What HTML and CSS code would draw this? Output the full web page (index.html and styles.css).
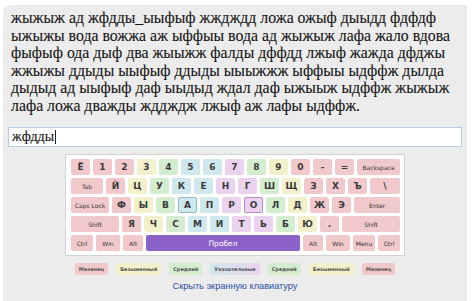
FILE: index.html
```html
<!DOCTYPE html>
<html lang="ru">
<head>
<meta charset="utf-8">
<link rel="stylesheet" href="styles.css">
</head>
<body>
<div class="panel">
  <p class="lesson">жыжыж ад жфдды_ыыфыф жждждд ложа ожыф дыыдд фдфдф<br>ыжыжы вода вожжа аж ыффыы вода ад жыжыж лафа жало вдова<br>фыфыф ода дыф два жыыжж фалды дффдд лжыф жажда дфджы<br>жжыжы ддыды ыыфыф ддыды ыыыжжж ыффыы ыдффж дылда<br>дыдыд ад ыыфыф даф ыыдыд ждал даф ыжыыж ыдффж жыжыж<br>лафа ложа дважды жддждж лжыф аж лафы ыдффж.</p>
  <div class="input"><span>жфдды</span><span class="caret"></span></div>
  <div class="keyboard">
    <div class="row">
      <div class="key p">Ё</div><div class="key p">1</div><div class="key p">2</div><div class="key y">3</div><div class="key g">4</div><div class="key b">5</div><div class="key b">6</div><div class="key l">7</div><div class="key g">8</div><div class="key y">9</div><div class="key p">0</div><div class="key p">-</div><div class="key p">=</div><div class="key p wide word">Backspace</div>
    </div>
    <div class="row">
      <div class="key p tab word">Tab</div><div class="key p">Й</div><div class="key y">Ц</div><div class="key g">У</div><div class="key b">К</div><div class="key b">Е</div><div class="key l">Н</div><div class="key l">Г</div><div class="key g">Ш</div><div class="key y">Щ</div><div class="key p">З</div><div class="key p">Х</div><div class="key p">Ъ</div><div class="key p wide">\</div>
    </div>
    <div class="row">
      <div class="key p caps word">Caps Lock</div><div class="key p">Ф</div><div class="key y">Ы</div><div class="key g">В</div><div class="key b home">А</div><div class="key b">П</div><div class="key l">Р</div><div class="key l home">О</div><div class="key g">Л</div><div class="key y">Д</div><div class="key p">Ж</div><div class="key p">Э</div><div class="key p wide word">Enter</div>
    </div>
    <div class="row">
      <div class="key p shift word">Shift</div><div class="key p">Я</div><div class="key y">Ч</div><div class="key g">С</div><div class="key b">М</div><div class="key b">И</div><div class="key l">Т</div><div class="key l">Ь</div><div class="key g">Б</div><div class="key y">Ю</div><div class="key p">.</div><div class="key p wide word">Shift</div>
    </div>
    <div class="row">
      <div class="key p ctrl word">Ctrl</div><div class="key p win word">Win</div><div class="key p alt word">Alt</div><div class="key space wide">Пробел</div><div class="key p alt word">Alt</div><div class="key p win word">Win</div><div class="key p menu word">Menu</div><div class="key p ctrl word">Ctrl</div>
    </div>
  </div>
  <div class="legend">
    <span class="tag p">Мизинец</span>
    <span class="tag y">Безымянный</span>
    <span class="tag g">Средний</span>
    <span class="tag idx">Указательные</span>
    <span class="tag g">Средний</span>
    <span class="tag y">Безымянный</span>
    <span class="tag p">Мизинец</span>
  </div>
  <a class="hide" href="#">Скрыть экранную клавиатуру</a>
</div>
</body>
</html>
```
FILE: styles.css
```css
html, body {
  margin: 0;
  padding: 0;
  background: #ffffff;
}
body {
  width: 474px;
  height: 301px;
  overflow: hidden;
}
.panel {
  margin: 5px 0 0 3px;
  width: 464px;
  height: 300px;
  background: #ececec;
  border-radius: 7px 0 0 0;
  padding: 4px 0 0 0;
  box-sizing: border-box;
  display: flex;
  flex-direction: column;
  align-items: center;
}
.lesson {
  align-self: stretch;
  margin: 0;
  padding: 0 0 0 8px;
  font-family: "Liberation Serif", "Times New Roman", serif;
  font-size: 15.8px;
  line-height: 17.5px;
  color: #161616;
  -webkit-text-stroke: 0.12px #161616;
  white-space: nowrap;
}
.input {
  align-self: stretch;
  margin: 13px 5px 0 5px;
  height: 20px;
  box-sizing: border-box;
  background: #ffffff;
  border: 1px solid #b7cbe6;
  display: flex;
  align-items: center;
  padding-left: 3px;
  font-family: "Liberation Serif", "Times New Roman", serif;
  font-size: 14px;
  color: #111;
  -webkit-text-stroke: 0.12px #111111;
}
.caret {
  width: 1px;
  height: 14px;
  background: #222;
  margin-left: 1px;
}
.keyboard {
  margin-top: 7px;
  width: 340px;
  box-sizing: border-box;
  background: #ffffff;
  border: 1px solid #d2d2d2;
  padding: 4px 4px 4px 5px;
  display: flex;
  flex-direction: column;
  gap: 3px;
}
.row {
  display: flex;
  gap: 3px;
  height: 16px;
}
.key {
  width: 19px;
  flex: none;
  border-radius: 2px;
  display: flex;
  align-items: center;
  justify-content: center;
  font-family: "DejaVu Sans", sans-serif;
  font-weight: bold;
  font-size: 9px;
  color: #3a3a3a;
  box-sizing: border-box;
}
.key.word {
  font-size: 6px;
  font-weight: normal;
  color: #333;
}
.key.wide { flex: 1 1 auto; width: auto; }
.key.tab { width: 32px; }
.key.caps { width: 38px; }
.key.shift { width: 48px; }
.key.ctrl { width: 22px; }
.key.win { width: 24px; }
.key.alt { width: 20px; }
.key.menu { width: 22px; }
.p { background: #f1c9cb; }
.y { background: #f3f1cb; }
.g { background: #d4edcf; }
.b { background: #cfe8ee; }
.l { background: #ebd3ef; }
.key.home.b { border: 1px solid #8fb9c4; }
.key.home.l { border: 1px solid #b48cc4; }
.key.space {
  background: #8b63c8;
  color: #ffffff;
  font-weight: normal;
  font-size: 7.5px;
}
.legend {
  margin-top: 7px;
  display: flex;
  gap: 8px;
}
.tag {
  font-family: "DejaVu Sans", sans-serif;
  font-size: 5px;
  font-weight: bold;
  color: #555;
  padding: 3px 4px;
  border-radius: 2px;
}
.tag.idx { background: linear-gradient(90deg, #cfe8ee, #ebd3ef); }
.hide {
  margin-top: 6px;
  font-family: "Liberation Sans", Arial, sans-serif;
  font-size: 9.2px;
  color: #2a4fa8;
  text-decoration: none;
}
```
